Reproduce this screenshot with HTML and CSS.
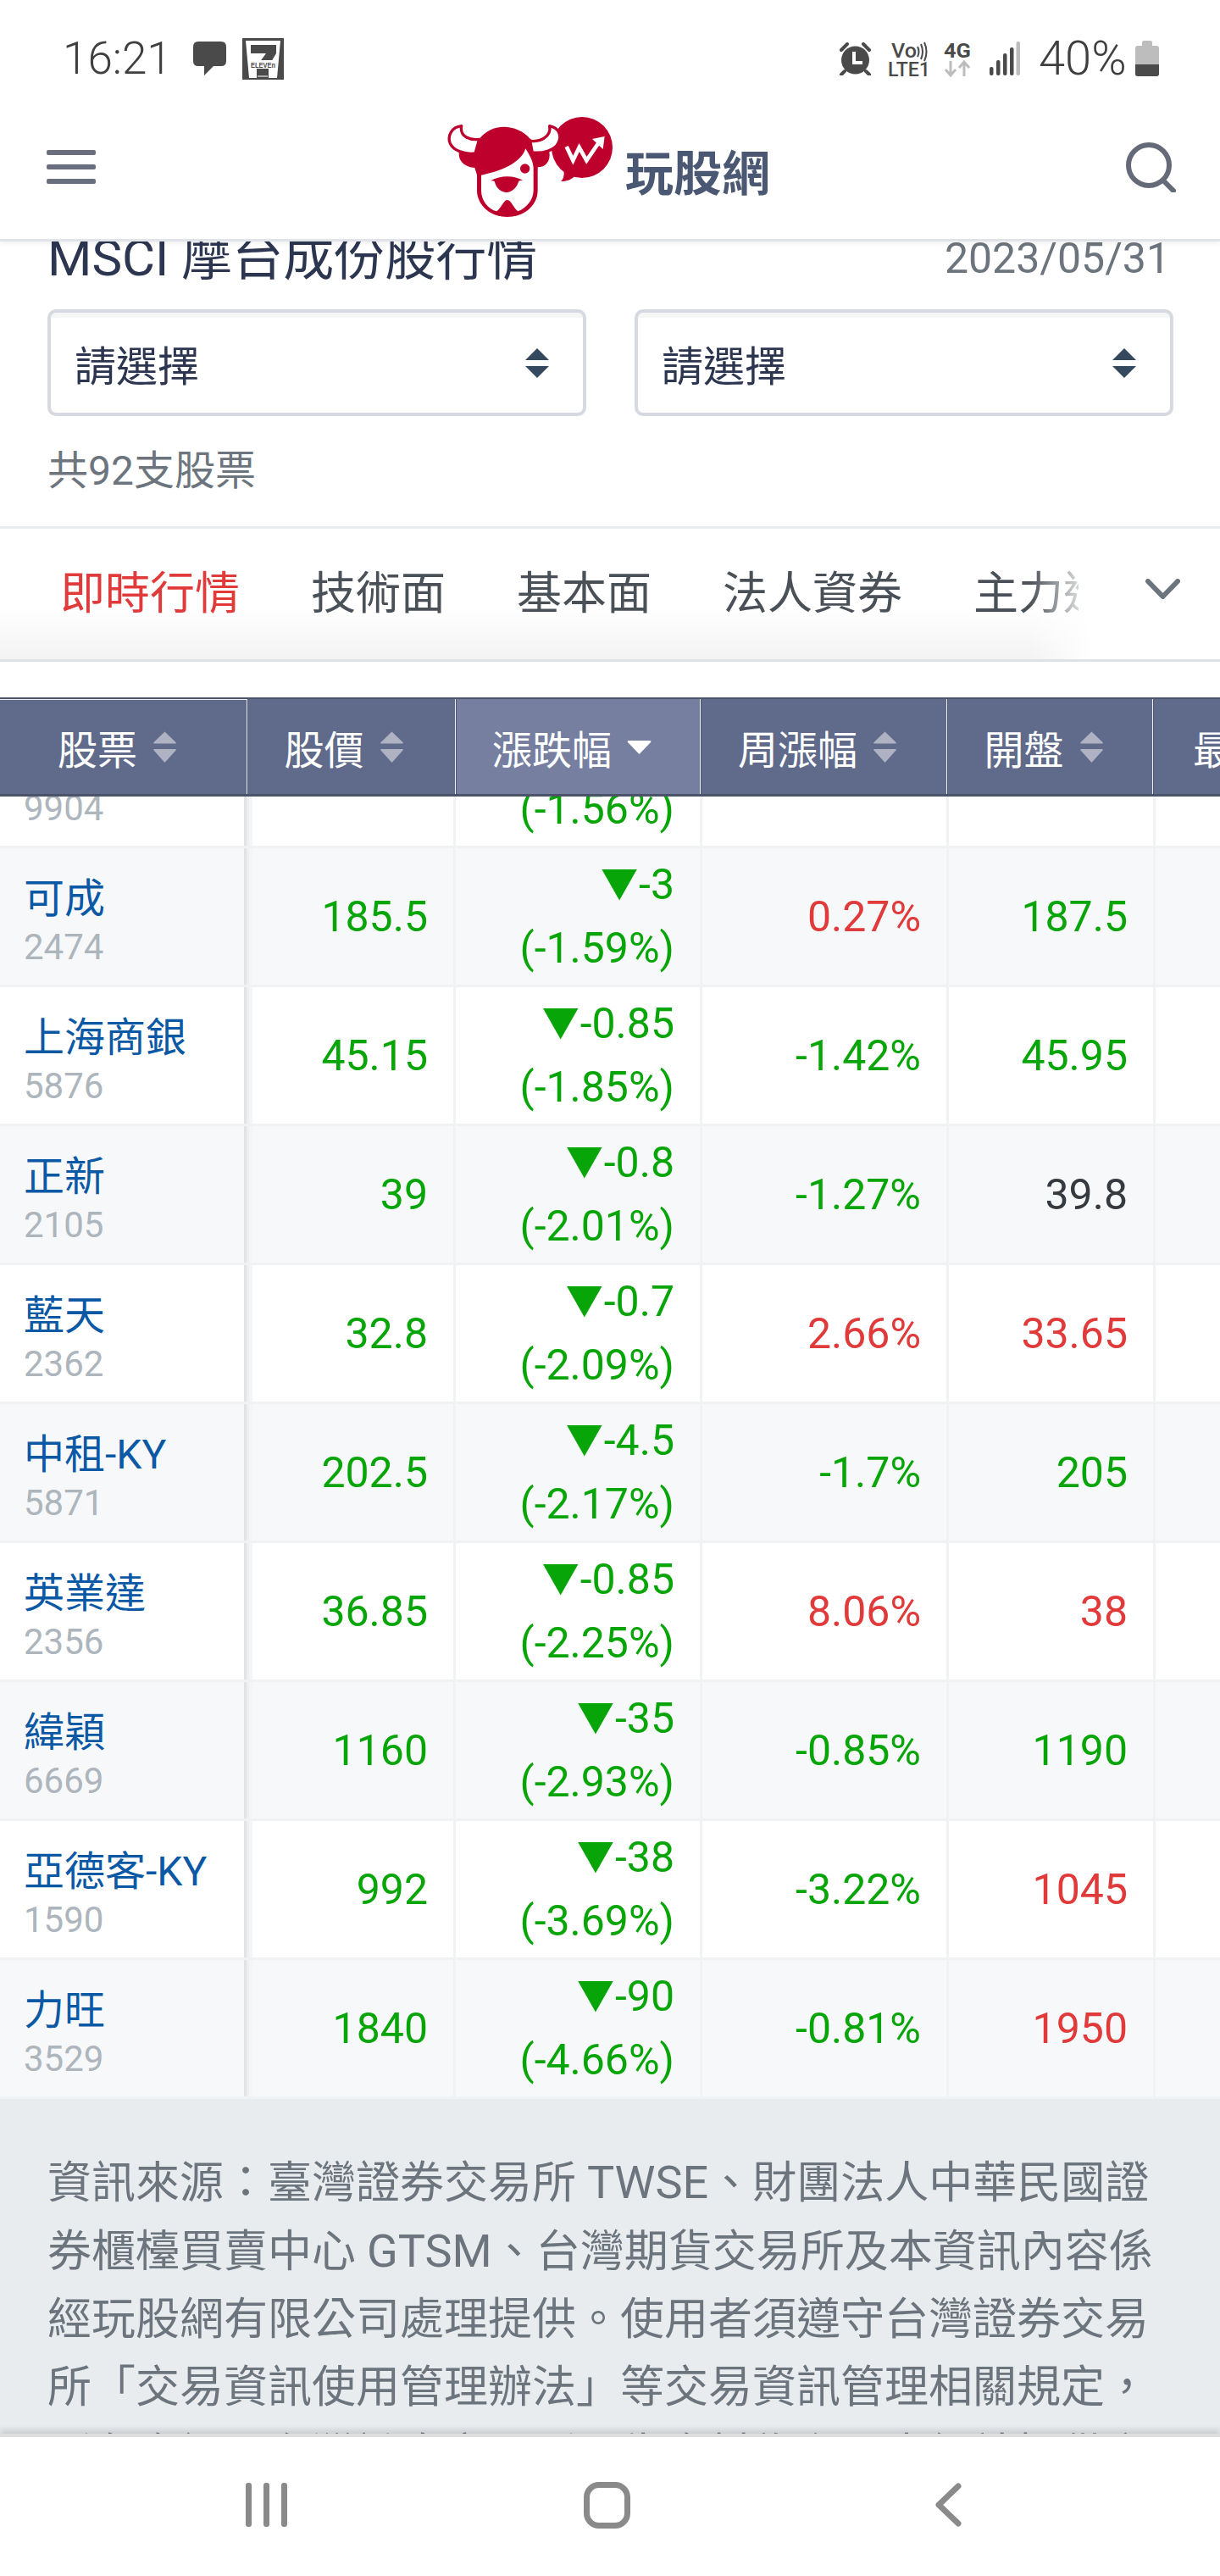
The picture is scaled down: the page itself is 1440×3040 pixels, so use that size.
FILE: index.html
```html
<!DOCTYPE html>
<html lang="zh-Hant">
<head>
<meta charset="utf-8">
<title>MSCI 摩台成份股行情</title>
<link rel="stylesheet" href="styles.css">
</head>
<body>
<svg class="defs" width="0" height="0" aria-hidden="true">
  <symbol id="sort" viewBox="0 0 29 38">
    <path d="M14.5 1.5 L27.5 14 Q28.5 15.5 27 15.5 L2 15.5 Q0.5 15.5 1.5 14 Z"/>
    <path d="M2 22 L27 22 Q28.5 22 27.5 23.5 L14.5 38 L1.5 23.5 Q0.5 22 2 22 Z"/>
  </symbol>
</svg>
<div class="phone">
  <header class="top">
    <div class="status">
      <span class="time">16:21</span>
      <svg class="ic-msg" viewBox="0 0 39 40"><path d="M6 0H33Q39 0 39 6V23Q39 29 33 29H24L13 40V29H6Q0 29 0 23V6Q0 0 6 0Z"/></svg>
      <svg class="ic-711" viewBox="0 0 49 49">
        <rect width="49" height="49" fill="#4a4a4a"/>
        <path d="M4 3H45L41 47H8Z" fill="#fff"/>
        <path d="M10 8H40V18L31 33V47H17V33L28 18H10Z" fill="#4a4a4a"/>
        <rect x="8" y="26" width="33" height="10" fill="#fff"/>
        <text x="10" y="34.500" class="t711" textLength="29" lengthAdjust="spacingAndGlyphs">ELEVEn</text>
        <rect x="18" y="44" width="12" height="2" fill="#aaa"/>
      </svg>
      <div class="status-right">
        <svg class="ic-alarm" viewBox="0 0 39 39">
          <circle cx="19.500" cy="21" r="16.500" fill="#4a4a4a"/>
          <path d="M3 9L10 2M36 9L29 2M7 34L3 38M32 34L36 38" stroke="#4a4a4a" stroke-width="4" stroke-linecap="round"/>
          <path d="M18 11V24H28" fill="none" stroke="#fff" stroke-width="4"/>
        </svg>
        <svg class="ic-vo" viewBox="0 0 50 41">
          <text x="4" y="19" class="tvo" textLength="30" lengthAdjust="spacingAndGlyphs">Vo</text>
          <path d="M35 6Q38 12 35 18M39 3Q43 12 39 21M43 1Q48 12 43 23" fill="none" stroke="#4a4a4a" stroke-width="2"/>
          <text x="0" y="41" class="tvo" textLength="50" lengthAdjust="spacingAndGlyphs">LTE1</text>
        </svg>
        <svg class="ic-4g" viewBox="0 0 32 41">
          <text x="0" y="19" class="tvo bold" textLength="32" lengthAdjust="spacingAndGlyphs">4G</text>
          <path d="M8 23V39M2 33L8 40L14 33M24 41V25M18 31L24 24L30 31" fill="none" stroke="#bdbdbd" stroke-width="3"/>
        </svg>
        <svg class="ic-signal" viewBox="0 0 36 40">
          <rect x="0" y="30" width="4.500" height="10" rx="2" fill="#4a4a4a"/>
          <rect x="8" y="22" width="4.500" height="18" rx="2" fill="#4a4a4a"/>
          <rect x="16" y="14" width="4.500" height="26" rx="2" fill="#4a4a4a"/>
          <rect x="24" y="7" width="4.500" height="33" rx="2" fill="#4a4a4a"/>
          <rect x="31.500" y="0" width="4.500" height="40" rx="2" fill="#bdbdbd"/>
        </svg>
        <span class="pct">40%</span>
        <svg class="ic-batt" viewBox="0 0 28 42">
          <path d="M8 2Q8 0 10 0H18Q20 0 20 2V6H25Q28 6 28 9V39Q28 42 25 42H3Q0 42 0 39V9Q0 6 3 6H8Z" fill="#bdbdbd"/>
          <path d="M0 28H28V39Q28 42 25 42H3Q0 42 0 39Z" fill="#4a4a4a"/>
        </svg>
      </div>
    </div>
    <div class="nav">
      <div class="burger"><i></i><i></i><i></i></div>
      <div class="brand">
        <svg class="logo" viewBox="85 55 588 360">
          <g fill="#bd002c">
            <circle cx="562" cy="166" r="108"/>
            <path d="M497 240C500 262 497 278 487 286C507 287 524 280 536 268Z"/>
            <path d="M128 175C118 215 150 236 182 238L192 270H402L404 236C432 236 452 216 446 180L378 135C355 108 320 93 285 93C250 93 220 108 198 136Z"/>
            <path d="M190 255V318C190 372 240 412 297 412C355 412 405 372 405 318V225H190Z"/>
          </g>
          <g fill="#fff" stroke="#bd002c" stroke-width="10" stroke-linejoin="round">
            <path d="M135 90C100 94 84 125 95 152C106 177 148 192 184 187L198 137C168 141 128 130 135 90Z"/>
            <path d="M447 90C482 96 490 128 478 150C466 175 425 188 386 184L378 143C410 148 455 130 447 90Z"/>
          </g>
          <path fill="#fff" d="M205 264C275 250 345 222 362 170C375 192 390 215 390 240V318C390 352 365 380 335 392C318 380 312 352 297 352C285 352 280 375 260 392C230 385 205 355 205 318Z"/>
          <circle cx="360" cy="241" r="17" fill="#bd002c"/>
          <path fill="#bd002c" d="M238 284C275 264 320 264 354 284C345 282 340 283 338 286C330 310 312 325 295 325C275 325 258 310 252 286C248 283 243 283 238 284Z"/>
          <path d="M507 163L530 212L552 166L578 212L626 142" fill="none" stroke="#fff" stroke-width="14" stroke-linejoin="miter"/>
          <path d="M598 136L642 127L636 172Z" fill="#fff"/>
        </svg>
        <span class="brand-name">玩股網</span>
      </div>
      <svg class="search" viewBox="0 0 59 59">
        <circle cx="27" cy="27" r="24" fill="none" stroke="#646a78" stroke-width="6"/>
        <path d="M44 45L56 57" stroke="#646a78" stroke-width="6" stroke-linecap="round"/>
      </svg>
    </div>
  </header>

  <main class="main">
    <section class="intro">
      <div class="title-row">
        <h1 class="title">MSCI 摩台成份股行情</h1>
        <span class="date">2023/05/31</span>
      </div>
      <div class="selects">
        <div class="select"><span>請選擇</span><svg class="updown" viewBox="0 0 28 35"><path d="M14 0L28 14H0Z"/><path d="M0 21H28L14 35Z"/></svg></div>
        <div class="select"><span>請選擇</span><svg class="updown" viewBox="0 0 28 35"><path d="M14 0L28 14H0Z"/><path d="M0 21H28L14 35Z"/></svg></div>
      </div>
      <p class="count">共92支股票</p>
    </section>

    <nav class="tabbar">
      <div class="tabs">
        <span class="tab on">即時行情</span>
        <span class="tab">技術面</span>
        <span class="tab">基本面</span>
        <span class="tab">法人資券</span>
        <span class="tab">主力進出</span>
      </div>
      <svg class="chev" viewBox="0 0 41 24"><path d="M3 3L20.500 21L38 3" fill="none" stroke="#6c757d" stroke-width="6" stroke-linecap="round" stroke-linejoin="round"/></svg>
    </nav>

    <div class="thead">
      <div class="th sticky"><span>股票</span><svg class="sort"><use href="#sort"/></svg></div>
      <div class="th"><span>股價</span><svg class="sort"><use href="#sort"/></svg></div>
      <div class="th active"><span>漲跌幅</span><svg class="sort-down" viewBox="0 0 29 16"><path d="M2 0H27Q29 0 28 2L14.500 16L1 2Q0 0 2 0Z"/></svg></div>
      <div class="th"><span>周漲幅</span><svg class="sort"><use href="#sort"/></svg></div>
      <div class="th"><span>開盤</span><svg class="sort"><use href="#sort"/></svg></div>
      <div class="th last"><span>最高</span></div>
    </div>

    <div class="tbody">
      <div class="row first">
        <div class="c stock"><a class="name"></a><small class="code">9904</small></div>
        <div class="c"></div>
        <div class="c chg g"><b class="line"></b><b class="line">(-1.56%)</b></div>
        <div class="c"></div><div class="c"></div><div class="c"></div>
      </div>
      <div class="row alt">
        <div class="c stock"><a class="name">可成</a><small class="code">2474</small></div>
        <div class="c g">185.5</div>
        <div class="c chg g"><b class="line"><i class="tri"></i>-3</b><b class="line">(-1.59%)</b></div>
        <div class="c r">0.27%</div><div class="c g">187.5</div><div class="c"></div>
      </div>
      <div class="row">
        <div class="c stock"><a class="name">上海商銀</a><small class="code">5876</small></div>
        <div class="c g">45.15</div>
        <div class="c chg g"><b class="line"><i class="tri"></i>-0.85</b><b class="line">(-1.85%)</b></div>
        <div class="c g">-1.42%</div><div class="c g">45.95</div><div class="c"></div>
      </div>
      <div class="row alt">
        <div class="c stock"><a class="name">正新</a><small class="code">2105</small></div>
        <div class="c g">39</div>
        <div class="c chg g"><b class="line"><i class="tri"></i>-0.8</b><b class="line">(-2.01%)</b></div>
        <div class="c g">-1.27%</div><div class="c k">39.8</div><div class="c"></div>
      </div>
      <div class="row">
        <div class="c stock"><a class="name">藍天</a><small class="code">2362</small></div>
        <div class="c g">32.8</div>
        <div class="c chg g"><b class="line"><i class="tri"></i>-0.7</b><b class="line">(-2.09%)</b></div>
        <div class="c r">2.66%</div><div class="c r">33.65</div><div class="c"></div>
      </div>
      <div class="row alt">
        <div class="c stock"><a class="name">中租-KY</a><small class="code">5871</small></div>
        <div class="c g">202.5</div>
        <div class="c chg g"><b class="line"><i class="tri"></i>-4.5</b><b class="line">(-2.17%)</b></div>
        <div class="c g">-1.7%</div><div class="c g">205</div><div class="c"></div>
      </div>
      <div class="row">
        <div class="c stock"><a class="name">英業達</a><small class="code">2356</small></div>
        <div class="c g">36.85</div>
        <div class="c chg g"><b class="line"><i class="tri"></i>-0.85</b><b class="line">(-2.25%)</b></div>
        <div class="c r">8.06%</div><div class="c r">38</div><div class="c"></div>
      </div>
      <div class="row alt">
        <div class="c stock"><a class="name">緯穎</a><small class="code">6669</small></div>
        <div class="c g">1160</div>
        <div class="c chg g"><b class="line"><i class="tri"></i>-35</b><b class="line">(-2.93%)</b></div>
        <div class="c g">-0.85%</div><div class="c g">1190</div><div class="c"></div>
      </div>
      <div class="row">
        <div class="c stock"><a class="name">亞德客-KY</a><small class="code">1590</small></div>
        <div class="c g">992</div>
        <div class="c chg g"><b class="line"><i class="tri"></i>-38</b><b class="line">(-3.69%)</b></div>
        <div class="c g">-3.22%</div><div class="c r">1045</div><div class="c"></div>
      </div>
      <div class="row alt">
        <div class="c stock"><a class="name">力旺</a><small class="code">3529</small></div>
        <div class="c g">1840</div>
        <div class="c chg g"><b class="line"><i class="tri"></i>-90</b><b class="line">(-4.66%)</b></div>
        <div class="c g">-0.81%</div><div class="c r">1950</div><div class="c"></div>
      </div>
    </div>

    <p class="info">資訊來源：臺灣證券交易所 <span class="latin">TWSE</span>、財團法人中華民國證券櫃檯買賣中心 <span class="latin">GTSM</span>、台灣期貨交易所及本資訊內容係經玩股網有限公司處理提供。使用者須遵守台灣證券交易所「交易資訊使用管理辦法」等交易資訊管理相關規定，所有資訊以台灣證券交易所公告資料為主，本網站提供之</p>
  </main>

  <footer class="softkeys">
    <div class="key-recent"><i></i><i></i><i></i></div>
    <div class="key-home"></div>
    <svg class="key-back" viewBox="0 0 32 52"><path d="M28 4L5 26L28 48" fill="none" stroke="#8a8a8a" stroke-width="7" stroke-linecap="round" stroke-linejoin="round"/></svg>
  </footer>
</div>
</body>
</html>
```

FILE: styles.css
```css
* { box-sizing: border-box; }
html, body { margin: 0; padding: 0; background: #fff; }
body { font-family: Roboto, "Noto Sans CJK TC", sans-serif; color: #2c3650; }
.defs { display: block; height: 0; }
.phone { width: 1440px; height: 3040px; display: flex; flex-direction: column; overflow: hidden; background: #fff; }

/* top */
.top { position: relative; z-index: 3; background: #fff; height: 285px; flex: none; border-bottom: 3px solid #e0e3e8; box-shadow: 0 3px 5px rgba(0,0,0,.05); }
.status { height: 138px; display: flex; align-items: center; padding: 0 72px 0 74px; color: #4a4a4a; }
.time { font-size: 53px; font-weight: 300; width: 123px; color: #3f3f3f; white-space: nowrap; }
.ic-msg { width: 39px; height: 40px; fill: #4a4a4a; margin-left: 31px; }
.ic-711 { width: 49px; height: 49px; margin-left: 19px; }
.t711 { font: 700 9px "Liberation Sans", sans-serif; fill: #4a4a4a; }
.status-right { margin-left: auto; display: flex; align-items: center; }
.ic-alarm { width: 39px; height: 39px; }
.ic-vo { width: 50px; height: 41px; margin-left: 19px; overflow: visible; }
.tvo { font: 500 24px Roboto, sans-serif; fill: #4a4a4a; }
.tvo.bold { font-weight: 700; }
.ic-4g { width: 32px; height: 41px; margin-left: 16px; overflow: visible; }
.ic-signal { width: 36px; height: 40px; margin-left: 22px; }
.pct { font-size: 56px; font-weight: 300; color: #3f3f3f; margin-left: 22px; width: 105px; white-space: nowrap; }
.ic-batt { width: 28px; height: 42px; margin-left: 9px; }

.nav { height: 144px; padding: 0 52px 26px 55px; display: flex; align-items: center; }
.burger { width: 58px; display: flex; flex-direction: column; gap: 11px; }
.burger i { display: block; height: 6px; border-radius: 2px; background: #6a6f7f; }
.brand { display: flex; align-items: center; margin-left: 415px; }
.logo { width: 196px; height: 120px; display: block; }
.brand-name { font-family: "Noto Sans CJK TC", sans-serif; font-size: 57px; line-height: 1; font-weight: 700; color: #4b5873; margin-left: 14px; padding-top: 6px; }
.search { width: 59px; height: 59px; margin-left: auto; }

/* main */
.main { flex: 1; min-height: 0; overflow: hidden; display: flex; flex-direction: column; background: #fff; }
.intro { flex: none; height: 336px; padding: 0 55px 0 56px; overflow: hidden; }
.title-row { display: flex; justify-content: space-between; align-items: center; height: 80px; margin-top: -20px; margin-bottom: 20px; }
.title { margin: 0; font-size: 60px; font-weight: 400; line-height: 80px; color: #2c3650; }
.date { font-size: 50px; color: #6c757d; padding-right: 4px; }
.selects { display: grid; grid-template-columns: 636px 636px; gap: 57px; }
.select { height: 126px; border: 4px solid #d6d9df; border-radius: 10px; background: linear-gradient(#f5f6f6 6px, #fff 6px); display: flex; align-items: center; justify-content: space-between; padding: 0 40px 0 28px; font-size: 49px; color: #2c3650; }
.updown { width: 28px; height: 35px; fill: #34495e; }
.count { margin: 38px 0 0; font-size: 48px; line-height: 54px; color: #6c757d; }

/* tabs */
.tabbar { flex: none; position: relative; display: flex; height: 160px; border-top: 3px solid #e9ecef; border-bottom: 3px solid #dee2e6; background: linear-gradient(#fff 60%, #f3f3f3 100%); }
.tabbar::before { content: ""; position: absolute; right: 0; top: 0; bottom: 0; width: 150px; background: #fff; }
.tabbar::after { content: ""; position: absolute; left: 1215px; top: 0; bottom: 0; width: 75px; background: linear-gradient(90deg, rgba(255,255,255,0), #fff); }
.tabs { width: 1273px; flex: none; overflow: hidden; display: flex; gap: 84px; padding-left: 71px; align-items: center; white-space: nowrap; }
.tab { flex: none; font-size: 53px; color: #495057; line-height: 1; }
.tab.on { color: #e03a3a; }
.chev { position: relative; z-index: 1; width: 41px; height: 24px; margin: 59px 0 0 79px; }

/* table */
.thead { flex: none; margin-top: 42px; height: 117px; display: grid; grid-template-columns: 292px 246px 289px 291px 243px 79px; background: #606a8a; border-top: 2px solid #4b5369; border-bottom: 3px solid #4b5369; color: #fff; font-size: 47px; }
.th { display: flex; align-items: center; justify-content: center; gap: 18px; padding-right: 14px; border-right: 1px solid #eef0f4; min-width: 0; white-space: nowrap; box-shadow: inset 1px 0 0 #4f5771; }
.th:nth-child(2) { padding-right: 17px; }
.th.sticky { box-shadow: inset 0 1px 0 #eef0f4; }
.th.active { background: #767f9f; }
.th.last { justify-content: flex-start; padding: 0 0 0 47px; border: 0; overflow: hidden; }
.sort { width: 29px; height: 38px; fill: #aeb2c2; flex: none; }
.sort-down { width: 29px; height: 16px; fill: #fff; flex: none; margin-top: 2px; }

.tbody { flex: none; overflow: hidden; }
.row { display: grid; grid-template-columns: 291px 247px 291px 291px 244px 76px; height: 164px; background: #fff; border-bottom: 3px solid #f1f2f4; font-size: 50px; }
.row.first { margin-top: -103px; }
.row.alt { background: #f7f8fa; }
.c { display: flex; align-items: center; justify-content: flex-end; padding-right: 30px; border-right: 3px solid #f1f2f4; white-space: nowrap; }
.c:last-child { border-right: 0; }
.stock { flex-direction: column; align-items: flex-start; justify-content: center; padding: 16px 0 0 28px; border-right: 3px solid #e2e3e5; box-shadow: 3px 0 0 #eeeff1, 7px 0 0 #f5f5f6; position: relative; z-index: 1; }
.name { display: block; min-height: 56px; font-size: 48px; line-height: 56px; color: #0b58a5; }
.code { font-size: 42px; line-height: 57px; color: #adb5bd; }
.chg { flex-direction: column; align-items: flex-end; justify-content: center; }
.line { font-weight: 400; line-height: 75px; height: 75px; display: flex; align-items: center; }
.tri { display: block; width: 42px; height: 37px; background: #08a508; clip-path: polygon(0 0, 100% 0, 50% 100%); margin-right: 2px; }
.g { color: #08a508; }
.r { color: #e03a3a; }
.k { color: #343a40; }

.info { flex: none; margin: 0; background: #e9ecef; padding: 59px 58px 80px 56px; font-size: 52px; line-height: 80px; color: #6c757d; }
.latin { font-size: 54px; }

/* soft keys */
.softkeys { position: relative; z-index: 3; flex: none; height: 168px; background: #fff; border-top: 4px solid #dedede; box-shadow: 0 -4px 7px rgba(0,0,0,.14); display: flex; align-items: center; justify-content: center; gap: 350px; padding: 0 15px 4px 0; }
.key-recent { width: 49px; height: 52px; display: flex; justify-content: space-between; }
.key-recent i { display: block; width: 7px; height: 52px; border-radius: 3px; background: #8a8a8a; }
.key-home { width: 55px; height: 55px; border: 7px solid #8a8a8a; border-radius: 18px; margin-right: 9px; }
.key-back { width: 32px; height: 52px; }
```
